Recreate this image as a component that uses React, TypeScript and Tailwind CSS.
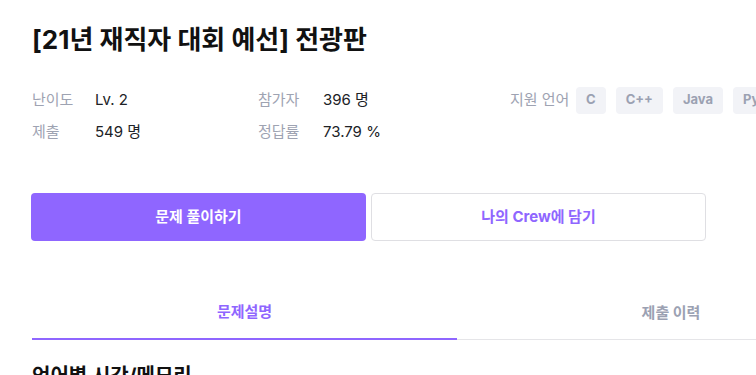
const font = "font-['Inter','Noto_Sans_CJK_KR',sans-serif]";

function Info({ label, value, labelW }: { label: string; value: string; labelW: string }) {
  return (
    <div className="flex h-7 items-center">
      <span className={`${labelW} shrink-0 text-[15px] text-[#9ea3b2]`}>{label}</span>
      <span className="text-[15px] text-[#202226]">{value}</span>
    </div>
  );
}

const langs = ["C", "C++", "Java", "Python3", "JavaScript"];

export default function App() {
  return (
    <div className={`h-[375px] w-[756px] overflow-hidden bg-white pl-8 ${font}`}>
      <h1 className="mt-[22px] h-9 whitespace-nowrap text-[26px] leading-9 font-bold text-[#111]">
        [21년 재직자 대회 예선] 전광판
      </h1>

      {/* meta */}
      <div className="mt-7 flex w-[1000px] whitespace-nowrap">
        <div className="flex w-[226px] shrink-0 flex-col gap-1">
          <Info label="난이도" value="Lv. 2" labelW="w-[63px]" />
          <Info label="제출" value="549 명" labelW="w-[63px]" />
        </div>
        <div className="flex w-[252px] shrink-0 flex-col gap-1">
          <Info label="참가자" value="396 명" labelW="w-[65px]" />
          <Info label="정답률" value="73.79 %" labelW="w-[65px]" />
        </div>
        <div className="flex h-7 shrink-0 items-center">
          <span className="w-[66px] shrink-0 text-[15px] text-[#9ea3b2]">지원 언어</span>
          <div className="flex gap-[10px]">
            {langs.map((l) => (
              <span
                key={l}
                className="flex h-[27px] shrink-0 items-center rounded bg-[#f2f3f7] px-[10px] text-[13px] font-bold text-[#9ba1b2]"
              >
                {l}
              </span>
            ))}
          </div>
        </div>
      </div>

      {/* actions */}
      <div className="mt-[47px] flex gap-[5px]">
        <button className="-ml-px flex h-12 w-[335px] items-center justify-center rounded bg-[#8f66ff] text-[15px] font-bold text-white">
          문제 풀이하기
        </button>
        <button className="flex h-12 w-[335px] items-center justify-center rounded border border-[#dfdfe3] bg-white text-[15px] font-bold text-[#8f66ff]">
          나의 Crew에 담기
        </button>
      </div>

      {/* tabs */}
      <div className="mt-12 flex w-[900px] border-b border-[#e5e5e8]">
        <div className="-mb-px flex h-[51px] w-[425px] shrink-0 items-center justify-center border-b-2 border-[#8f66ff] pb-[2px] text-[15px] font-bold text-[#8f66ff]">
          문제설명
        </div>
        <div className="flex h-[50px] w-[428px] shrink-0 items-center justify-center pb-[2px] text-[15px] font-bold text-[#9ba1b2]">
          제출 이력
        </div>
      </div>

      <h2 className="mt-[22px] text-[20px] leading-7 font-bold text-[#111]">언어별 시간/메모리</h2>
    </div>
  );
}
